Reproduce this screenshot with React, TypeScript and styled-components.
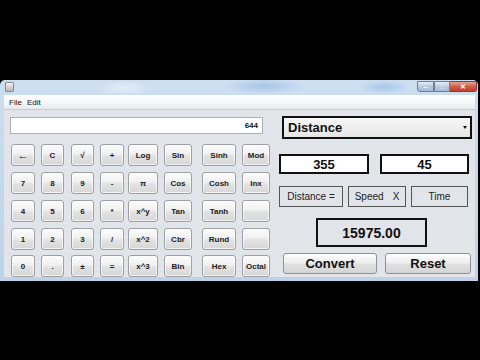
import styled, { createGlobalStyle } from "styled-components";

const GlobalStyle = createGlobalStyle`
  html, body {
    margin: 0;
    padding: 0;
    background: #000;
  }
`;

/*----------------------------------
	Frame
----------------------------------*/
const Screen = styled.div`
  width: 480px;
  height: 360px;
  background: #000;
  padding-top: 80px;
  box-sizing: border-box;
  font-family: "Liberation Sans", Arial, sans-serif;
`;

const Window = styled.div`
  width: 478px;
  height: 201px;
  display: flex;
  flex-direction: column;
  background: linear-gradient(180deg, #cddef1 0%, #bed1e6 100%);
  border-radius: 5px 5px 0 0;
  padding: 0 3px 4px 4px;
  box-sizing: border-box;
`;

const TitleBar = styled.div`
  height: 15px;
  display: flex;
  align-items: flex-start;
  justify-content: space-between;
  background:
    radial-gradient(ellipse 30px 8px at 120px 8px, rgba(255, 255, 255, 0.45), transparent),
    radial-gradient(ellipse 40px 8px at 260px 6px, rgba(120, 170, 220, 0.45), transparent),
    radial-gradient(ellipse 25px 7px at 380px 7px, rgba(130, 180, 230, 0.5), transparent);
`;

const AppIcon = styled.div`
  width: 7px;
  height: 8px;
  margin: 2px 0 0 1px;
  background: linear-gradient(180deg, #f4f4f4, #b8b8b8);
  border: 1px solid #8a8a8a;
  border-radius: 1px;
`;

const Controls = styled.div`
  display: flex;
  margin-top: 1px;
  margin-right: -2px;
`;

const Control = styled.div<{ $w: number; $close?: boolean }>`
  width: ${(p) => p.$w}px;
  height: 9px;
  display: flex;
  align-items: center;
  justify-content: center;
  color: #fff;
  font-size: 7px;
  font-weight: bold;
  border: 1px solid ${(p) => (p.$close ? "#8d3a30" : "#6c7f96")};
  border-left-width: ${(p) => (p.$close ? 0 : 1)}px;
  background: ${(p) =>
    p.$close
      ? "linear-gradient(180deg, #e7a597 0%, #d0614d 50%, #c0402c 100%)"
      : "linear-gradient(180deg, #e4edf7 0%, #b9cbe0 50%, #a6bcd6 100%)"};
  &:first-child {
    border-radius: 0 0 0 3px;
  }
  &:last-child {
    border-radius: 0 0 3px 0;
  }
`;

const MenuBar = styled.div`
  height: 14px;
  display: flex;
  align-items: center;
  gap: 5px;
  padding-left: 5px;
  font-size: 8px;
  color: #111;
  background: linear-gradient(180deg, #ffffff 0%, #f3f5f8 60%, #e6eaef 100%);
  border-bottom: 1px solid #c8ccd2;
`;

const Content = styled.div`
  flex: 1;
  display: flex;
  background: #e1e4e9;
`;

/*----------------------------------
	Calculator
----------------------------------*/
const LeftPanel = styled.div`
  width: 275px;
  padding: 7px 0 0 6px;
  box-sizing: border-box;
`;

const Display = styled.div`
  width: 253px;
  height: 17px;
  background: #fff;
  border: 1px solid #a9b0b8;
  box-sizing: border-box;
  display: flex;
  align-items: center;
  justify-content: flex-end;
  padding-right: 4px;
  font-size: 8px;
  font-weight: bold;
  color: #111;
`;

const KeyGrid = styled.div`
  margin: 10px 0 0 1px;
  display: grid;
  grid-template-columns: 30px 30px 29px 28px 36px 38px 40px 30px;
  grid-template-rows: 28px 28px 28px 27px 22px;
`;

const Key = styled.div<{ $w: number; $big?: boolean }>`
  width: ${(p) => p.$w}px;
  height: 22px;
  box-sizing: border-box;
  display: flex;
  align-items: center;
  justify-content: center;
  font-size: ${(p) => (p.$big ? 11 : 8)}px;
  font-weight: bold;
  color: #1c1c1c;
  border: 1px solid #9c9fa4;
  border-radius: 3px;
  background: linear-gradient(180deg, #fdfdfd 0%, #f0f0f0 45%, #e2e2e2 55%, #d7d7d7 100%);
  box-shadow: inset 0 0 0 1px rgba(255, 255, 255, 0.7);
`;

const widths = [24, 23, 23, 24, 30, 28, 34, 28];

const keys = [
  ["←", "C", "√", "+", "Log", "Sin", "Sinh", "Mod"],
  ["7", "8", "9", "-", "π", "Cos", "Cosh", "Inx"],
  ["4", "5", "6", "*", "x^y", "Tan", "Tanh", ""],
  ["1", "2", "3", "/", "x^2", "Cbr", "Rund", ""],
  ["0", ".", "±", "=", "x^3", "Bin", "Hex", "Octal"],
];

/*----------------------------------
	Converter
----------------------------------*/
const RightPanel = styled.div`
  flex: 1;
  padding-top: 6px;
  display: flex;
  flex-direction: column;
`;

const Combo = styled.div`
  width: 190px;
  height: 23px;
  margin-left: 3px;
  box-sizing: border-box;
  border: 2px solid #111;
  background: linear-gradient(180deg, #f6f6f6 0%, #e6e6e6 100%);
  display: flex;
  align-items: center;
  justify-content: space-between;
  padding: 0 3px 0 4px;
  font-size: 13px;
  font-weight: bold;
  color: #111;
`;

const Arrow = styled.div`
  width: 0;
  height: 0;
  border-left: 2px solid transparent;
  border-right: 2px solid transparent;
  border-top: 3px solid #111;
`;

const Row = styled.div<{ $gap: number; $top: number; $left?: number }>`
  display: flex;
  gap: ${(p) => p.$gap}px;
  margin-top: ${(p) => p.$top}px;
  margin-left: ${(p) => p.$left ?? 0}px;
`;

const Field = styled.div<{ $w: number }>`
  width: ${(p) => p.$w}px;
  height: 20px;
  box-sizing: border-box;
  border: 2px solid #111;
  background: #fff;
  display: flex;
  align-items: center;
  justify-content: center;
  font-size: 13px;
  font-weight: bold;
  color: #111;
`;

const Label = styled.div<{ $w: number }>`
  width: ${(p) => p.$w}px;
  height: 21px;
  box-sizing: border-box;
  border: 1px solid #555;
  display: flex;
  align-items: center;
  justify-content: center;
  gap: 9px;
  font-size: 10px;
  color: #222;
`;

const Result = styled.div`
  width: 111px;
  height: 29px;
  margin: 11px 0 0 37px;
  box-sizing: border-box;
  border: 2px solid #111;
  display: flex;
  align-items: center;
  justify-content: center;
  font-size: 14px;
  font-weight: bold;
  color: #111;
`;

const ActionButton = styled.div<{ $w: number }>`
  width: ${(p) => p.$w}px;
  height: 21px;
  box-sizing: border-box;
  border: 1px solid #8e9196;
  border-radius: 3px;
  background: linear-gradient(180deg, #fdfdfd 0%, #eeeeee 45%, #dfdfdf 55%, #d6d6d6 100%);
  display: flex;
  align-items: center;
  justify-content: center;
  font-size: 13px;
  font-weight: bold;
  color: #111;
`;

const App = () => {
  return (
    <Screen>
      <GlobalStyle />
      <Window>
        <TitleBar>
          <AppIcon />
          <Controls>
            <Control $w={15}>–</Control>
            <Control $w={14}>□</Control>
            <Control $w={26} $close>✕</Control>
          </Controls>
        </TitleBar>
        <MenuBar>
          <span>File</span>
          <span>Edit</span>
        </MenuBar>
        <Content>
          <LeftPanel>
            <Display>644</Display>
            <KeyGrid>
              {keys.map((row, r) =>
                row.map((label, c) => (
                  <Key key={`${r}-${c}`} $w={widths[c]} $big={label === "←"}>
                    {label}
                  </Key>
                ))
              )}
            </KeyGrid>
          </LeftPanel>
          <RightPanel>
            <Combo>
              Distance
              <Arrow />
            </Combo>
            <Row $gap={11} $top={15}>
              <Field $w={90}>355</Field>
              <Field $w={89}>45</Field>
            </Row>
            <Row $gap={5} $top={12}>
              <Label $w={64}>Distance =</Label>
              <Label $w={58}>
                <span>Speed</span>
                <span>X</span>
              </Label>
              <Label $w={57}>Time</Label>
            </Row>
            <Result>15975.00</Result>
            <Row $gap={8} $top={6} $left={4}>
              <ActionButton $w={94}>Convert</ActionButton>
              <ActionButton $w={86}>Reset</ActionButton>
            </Row>
          </RightPanel>
        </Content>
      </Window>
    </Screen>
  );
};

export default App;
